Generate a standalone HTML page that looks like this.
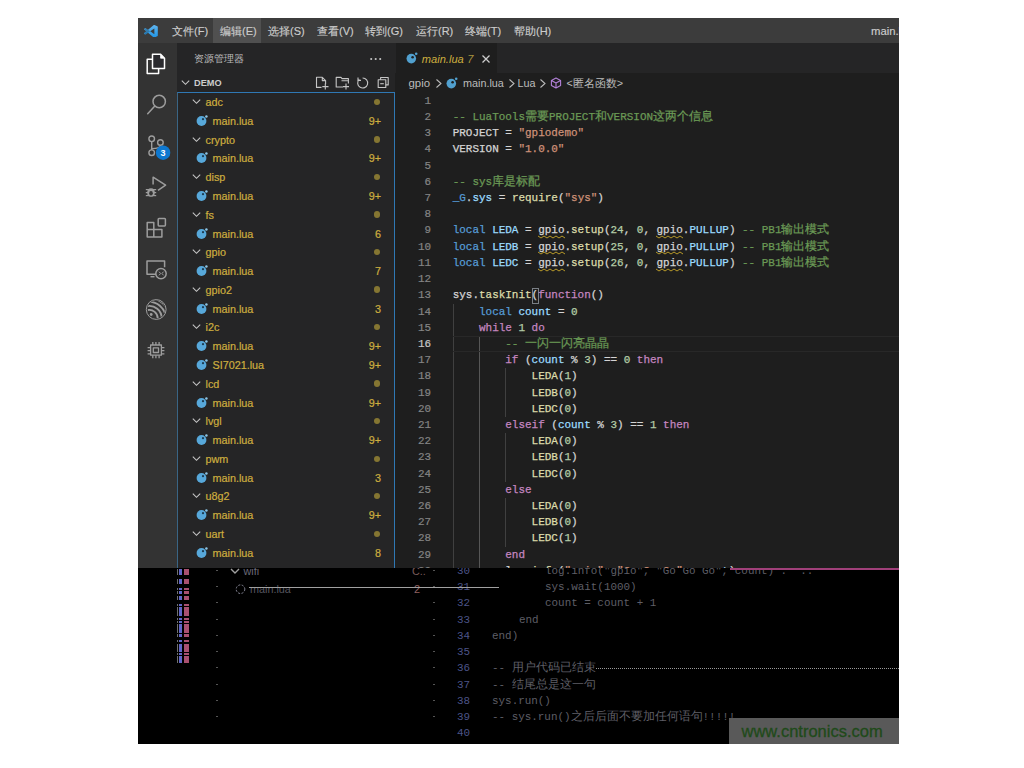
<!DOCTYPE html>
<html><head><meta charset="utf-8">
<style>
*{margin:0;padding:0;box-sizing:border-box}
html,body{width:1024px;height:768px;background:#fff;overflow:hidden;font-family:"Liberation Sans",sans-serif}
.a{position:absolute}
#win{position:absolute;left:138px;top:18px;width:761px;height:726px;background:#1e1e1e;overflow:hidden}
#title{left:0;top:0;width:761px;height:25px;background:#3c3c3c;color:#cccccc;font-size:11px}
#title .m{-webkit-text-stroke:0.15px currentColor;position:absolute;top:0;height:25px;line-height:27px;white-space:nowrap}
#act{left:0;top:25px;width:39px;height:525px;background:#333333}
#side{left:39px;top:25px;width:218px;height:525px;background:#252526;color:#cccccc;font-size:10.8px}
#ed{left:257px;top:25px;width:504px;height:525px;background:#1e1e1e}
#bot{left:0;top:550px;width:761px;height:176px;background:#000;overflow:hidden}
.row{-webkit-text-stroke:0.2px currentColor;position:absolute;left:0;width:218px;height:19px;line-height:20.4px;color:#cdae3f;white-space:nowrap}
.code{-webkit-text-stroke:0.25px currentColor;position:absolute;left:57.7px;font-family:"Liberation Mono",monospace;font-size:10.965px;white-space:pre;height:16.2px;line-height:16.2px;color:#d4d4d4}
.ln{-webkit-text-stroke:0.2px currentColor;position:absolute;left:0;width:36px;text-align:right;font-family:"Liberation Mono",monospace;font-size:10.92px;color:#858585;line-height:16.2px;height:16.2px}
.dot{position:absolute;left:196.8px;top:6.6px;width:6.4px;height:6.4px;border-radius:3.2px;background:#857632}
.badge{right:14px;text-align:right}
.cj{font-size:12px}
.sq{}
.bm{}
.guide{width:1px;background:#404040}
.cur{color:#c6c6c6}
.curline{border-top:1px solid #282828;border-bottom:1px solid #282828}
.gl{font-family:"Liberation Mono",monospace;white-space:pre;line-height:16px}
.k{color:#569cd6}.v{color:#9cdcfe}.f{color:#dcdcaa}.s{color:#ce9178}.c{color:#6a9955}.n{color:#b5cea8}.p{color:#c586c0}
</style></head><body>
<div id="win">
  <div id="title" class="a">
    <svg class="a" style="left:6px;top:6.6px" width="13.8" height="12.6" viewBox="0 0 100 100" preserveAspectRatio="none"><defs><linearGradient id="vg" x1="0" y1="0" x2="0" y2="1"><stop offset="0" stop-color="#5fb4ee"/><stop offset="1" stop-color="#1f95e6"/></linearGradient></defs><path fill="url(#vg)" d="M96.46 10.8 L75.86 0.87 C73.48 -0.28 70.64 0.2 68.77 2.07 L29.36 38.04 L12.17 25.0 C10.57 23.79 8.33 23.89 6.84 25.24 L1.34 30.25 C-0.48 31.9 -0.48 34.76 1.33 36.42 L16.25 50.0 L1.33 63.58 C-0.48 65.240 -0.48 68.1 1.34 69.75 L6.84 74.76 C8.33 76.11 10.57 76.21 12.17 75.0 L29.36 61.96 L68.77 97.93 C70.64 99.8 73.48 100.28 75.86 99.13 L96.46 89.2 C98.62 88.16 100 85.97 100 83.57 V16.43 C100 14.03 98.62 11.84 96.46 10.8 Z M75.02 72.7 L45.11 50 L75.02 27.3 V72.7 Z"/><path fill="#000" opacity="0.25" d="M29.36 38.04 L12.17 25.0 L1.34 30.25 L16.25 50 L1.34 69.75 L12.17 75 L29.36 61.96 L45.11 50 Z"/></svg>
    <div class="m" style="left:34px">文件(F)</div>
    <div class="m" style="left:75px;width:48px;background:#505050;line-height:25px"></div>
    <div class="m" style="left:82px">编辑(E)</div>
    <div class="m" style="left:130px">选择(S)</div>
    <div class="m" style="left:179px">查看(V)</div>
    <div class="m" style="left:227px">转到(G)</div>
    <div class="m" style="left:278px">运行(R)</div>
    <div class="m" style="left:327px">终端(T)</div>
    <div class="m" style="left:376px">帮助(H)</div>
    <div class="m" style="left:733px;font-size:11.3px">main.lua - demo</div>
  </div>
  <div id="act" class="a"></div>
  <div id="side" class="a">

<div class="a" style="left:16.5px;top:10px;font-size:9.5px;color:#bbbbbb;line-height:12px">资源管理器</div>
<svg class="a" style="left:193px;top:14px" width="12" height="4" viewBox="0 0 12 4"><circle cx="1.2" cy="2" r="1.05" fill="#c5c5c5"/><circle cx="5.7" cy="2" r="1.05" fill="#c5c5c5"/><circle cx="10.2" cy="2" r="1.05" fill="#c5c5c5"/></svg>
<svg class="a" style="left:4px;top:35px" width="9" height="9" viewBox="0 0 9 9"><path d="M0.8 2.6 L4.5 6.3 L8.2 2.6" stroke="#c5c5c5" stroke-width="1.1" fill="none"/></svg>
<div class="a" style="left:17px;top:33.5px;font-size:9.2px;font-weight:bold;color:#cccccc;line-height:12px">DEMO</div>
<div id="tree" class="a" style="left:0;top:49px;width:218px;height:476px;border:1px solid #2f78b4;border-left-color:#3a6585;border-bottom:none"></div>
<div class="row" style="top:49.10px"><svg class="a chev" style="left:15px;top:5px" width="9" height="9" viewBox="0 0 9 9"><path d="M0.8 2.6 L4.5 6.3 L8.2 2.6" stroke="#c5c5c5" stroke-width="1.1" fill="none"/></svg><span class="a" style="left:28.5px">adc</span><span class="dot"></span></div>
<div class="row" style="top:67.88px"><svg class="a" style="left:18.5px;top:4px" width="12" height="12" viewBox="0 0 12 12"><circle cx="5.5" cy="6.0" r="4.9" fill="#57a8da"/><circle cx="7.0" cy="4.2" r="1.1" fill="#1c3a50"/><circle cx="10.4" cy="1.4" r="1.25" fill="#8cc4e4"/></svg><span class="a" style="left:35.5px">main.lua</span><span class="a badge">9+</span></div>
<div class="row" style="top:86.66px"><svg class="a chev" style="left:15px;top:5px" width="9" height="9" viewBox="0 0 9 9"><path d="M0.8 2.6 L4.5 6.3 L8.2 2.6" stroke="#c5c5c5" stroke-width="1.1" fill="none"/></svg><span class="a" style="left:28.5px">crypto</span><span class="dot"></span></div>
<div class="row" style="top:105.44px"><svg class="a" style="left:18.5px;top:4px" width="12" height="12" viewBox="0 0 12 12"><circle cx="5.5" cy="6.0" r="4.9" fill="#57a8da"/><circle cx="7.0" cy="4.2" r="1.1" fill="#1c3a50"/><circle cx="10.4" cy="1.4" r="1.25" fill="#8cc4e4"/></svg><span class="a" style="left:35.5px">main.lua</span><span class="a badge">9+</span></div>
<div class="row" style="top:124.22px"><svg class="a chev" style="left:15px;top:5px" width="9" height="9" viewBox="0 0 9 9"><path d="M0.8 2.6 L4.5 6.3 L8.2 2.6" stroke="#c5c5c5" stroke-width="1.1" fill="none"/></svg><span class="a" style="left:28.5px">disp</span><span class="dot"></span></div>
<div class="row" style="top:143.00px"><svg class="a" style="left:18.5px;top:4px" width="12" height="12" viewBox="0 0 12 12"><circle cx="5.5" cy="6.0" r="4.9" fill="#57a8da"/><circle cx="7.0" cy="4.2" r="1.1" fill="#1c3a50"/><circle cx="10.4" cy="1.4" r="1.25" fill="#8cc4e4"/></svg><span class="a" style="left:35.5px">main.lua</span><span class="a badge">9+</span></div>
<div class="row" style="top:161.78px"><svg class="a chev" style="left:15px;top:5px" width="9" height="9" viewBox="0 0 9 9"><path d="M0.8 2.6 L4.5 6.3 L8.2 2.6" stroke="#c5c5c5" stroke-width="1.1" fill="none"/></svg><span class="a" style="left:28.5px">fs</span><span class="dot"></span></div>
<div class="row" style="top:180.56px"><svg class="a" style="left:18.5px;top:4px" width="12" height="12" viewBox="0 0 12 12"><circle cx="5.5" cy="6.0" r="4.9" fill="#57a8da"/><circle cx="7.0" cy="4.2" r="1.1" fill="#1c3a50"/><circle cx="10.4" cy="1.4" r="1.25" fill="#8cc4e4"/></svg><span class="a" style="left:35.5px">main.lua</span><span class="a badge">6</span></div>
<div class="row" style="top:199.34px"><svg class="a chev" style="left:15px;top:5px" width="9" height="9" viewBox="0 0 9 9"><path d="M0.8 2.6 L4.5 6.3 L8.2 2.6" stroke="#c5c5c5" stroke-width="1.1" fill="none"/></svg><span class="a" style="left:28.5px">gpio</span><span class="dot"></span></div>
<div class="row" style="top:218.12px"><svg class="a" style="left:18.5px;top:4px" width="12" height="12" viewBox="0 0 12 12"><circle cx="5.5" cy="6.0" r="4.9" fill="#57a8da"/><circle cx="7.0" cy="4.2" r="1.1" fill="#1c3a50"/><circle cx="10.4" cy="1.4" r="1.25" fill="#8cc4e4"/></svg><span class="a" style="left:35.5px">main.lua</span><span class="a badge">7</span></div>
<div class="row" style="top:236.90px"><svg class="a chev" style="left:15px;top:5px" width="9" height="9" viewBox="0 0 9 9"><path d="M0.8 2.6 L4.5 6.3 L8.2 2.6" stroke="#c5c5c5" stroke-width="1.1" fill="none"/></svg><span class="a" style="left:28.5px">gpio2</span><span class="dot"></span></div>
<div class="row" style="top:255.68px"><svg class="a" style="left:18.5px;top:4px" width="12" height="12" viewBox="0 0 12 12"><circle cx="5.5" cy="6.0" r="4.9" fill="#57a8da"/><circle cx="7.0" cy="4.2" r="1.1" fill="#1c3a50"/><circle cx="10.4" cy="1.4" r="1.25" fill="#8cc4e4"/></svg><span class="a" style="left:35.5px">main.lua</span><span class="a badge">3</span></div>
<div class="row" style="top:274.46px"><svg class="a chev" style="left:15px;top:5px" width="9" height="9" viewBox="0 0 9 9"><path d="M0.8 2.6 L4.5 6.3 L8.2 2.6" stroke="#c5c5c5" stroke-width="1.1" fill="none"/></svg><span class="a" style="left:28.5px">i2c</span><span class="dot"></span></div>
<div class="row" style="top:293.24px"><svg class="a" style="left:18.5px;top:4px" width="12" height="12" viewBox="0 0 12 12"><circle cx="5.5" cy="6.0" r="4.9" fill="#57a8da"/><circle cx="7.0" cy="4.2" r="1.1" fill="#1c3a50"/><circle cx="10.4" cy="1.4" r="1.25" fill="#8cc4e4"/></svg><span class="a" style="left:35.5px">main.lua</span><span class="a badge">9+</span></div>
<div class="row" style="top:312.02px"><svg class="a" style="left:18.5px;top:4px" width="12" height="12" viewBox="0 0 12 12"><circle cx="5.5" cy="6.0" r="4.9" fill="#57a8da"/><circle cx="7.0" cy="4.2" r="1.1" fill="#1c3a50"/><circle cx="10.4" cy="1.4" r="1.25" fill="#8cc4e4"/></svg><span class="a" style="left:35.5px">SI7021.lua</span><span class="a badge">9+</span></div>
<div class="row" style="top:330.80px"><svg class="a chev" style="left:15px;top:5px" width="9" height="9" viewBox="0 0 9 9"><path d="M0.8 2.6 L4.5 6.3 L8.2 2.6" stroke="#c5c5c5" stroke-width="1.1" fill="none"/></svg><span class="a" style="left:28.5px">lcd</span><span class="dot"></span></div>
<div class="row" style="top:349.58px"><svg class="a" style="left:18.5px;top:4px" width="12" height="12" viewBox="0 0 12 12"><circle cx="5.5" cy="6.0" r="4.9" fill="#57a8da"/><circle cx="7.0" cy="4.2" r="1.1" fill="#1c3a50"/><circle cx="10.4" cy="1.4" r="1.25" fill="#8cc4e4"/></svg><span class="a" style="left:35.5px">main.lua</span><span class="a badge">9+</span></div>
<div class="row" style="top:368.36px"><svg class="a chev" style="left:15px;top:5px" width="9" height="9" viewBox="0 0 9 9"><path d="M0.8 2.6 L4.5 6.3 L8.2 2.6" stroke="#c5c5c5" stroke-width="1.1" fill="none"/></svg><span class="a" style="left:28.5px">lvgl</span><span class="dot"></span></div>
<div class="row" style="top:387.14px"><svg class="a" style="left:18.5px;top:4px" width="12" height="12" viewBox="0 0 12 12"><circle cx="5.5" cy="6.0" r="4.9" fill="#57a8da"/><circle cx="7.0" cy="4.2" r="1.1" fill="#1c3a50"/><circle cx="10.4" cy="1.4" r="1.25" fill="#8cc4e4"/></svg><span class="a" style="left:35.5px">main.lua</span><span class="a badge">9+</span></div>
<div class="row" style="top:405.92px"><svg class="a chev" style="left:15px;top:5px" width="9" height="9" viewBox="0 0 9 9"><path d="M0.8 2.6 L4.5 6.3 L8.2 2.6" stroke="#c5c5c5" stroke-width="1.1" fill="none"/></svg><span class="a" style="left:28.5px">pwm</span><span class="dot"></span></div>
<div class="row" style="top:424.70px"><svg class="a" style="left:18.5px;top:4px" width="12" height="12" viewBox="0 0 12 12"><circle cx="5.5" cy="6.0" r="4.9" fill="#57a8da"/><circle cx="7.0" cy="4.2" r="1.1" fill="#1c3a50"/><circle cx="10.4" cy="1.4" r="1.25" fill="#8cc4e4"/></svg><span class="a" style="left:35.5px">main.lua</span><span class="a badge">3</span></div>
<div class="row" style="top:443.48px"><svg class="a chev" style="left:15px;top:5px" width="9" height="9" viewBox="0 0 9 9"><path d="M0.8 2.6 L4.5 6.3 L8.2 2.6" stroke="#c5c5c5" stroke-width="1.1" fill="none"/></svg><span class="a" style="left:28.5px">u8g2</span><span class="dot"></span></div>
<div class="row" style="top:462.26px"><svg class="a" style="left:18.5px;top:4px" width="12" height="12" viewBox="0 0 12 12"><circle cx="5.5" cy="6.0" r="4.9" fill="#57a8da"/><circle cx="7.0" cy="4.2" r="1.1" fill="#1c3a50"/><circle cx="10.4" cy="1.4" r="1.25" fill="#8cc4e4"/></svg><span class="a" style="left:35.5px">main.lua</span><span class="a badge">9+</span></div>
<div class="row" style="top:481.04px"><svg class="a chev" style="left:15px;top:5px" width="9" height="9" viewBox="0 0 9 9"><path d="M0.8 2.6 L4.5 6.3 L8.2 2.6" stroke="#c5c5c5" stroke-width="1.1" fill="none"/></svg><span class="a" style="left:28.5px">uart</span><span class="dot"></span></div>
<div class="row" style="top:499.82px"><svg class="a" style="left:18.5px;top:4px" width="12" height="12" viewBox="0 0 12 12"><circle cx="5.5" cy="6.0" r="4.9" fill="#57a8da"/><circle cx="7.0" cy="4.2" r="1.1" fill="#1c3a50"/><circle cx="10.4" cy="1.4" r="1.25" fill="#8cc4e4"/></svg><span class="a" style="left:35.5px">main.lua</span><span class="a badge">8</span></div>
<div class="row" style="top:518.60px"><svg class="a chev" style="left:15px;top:5px" width="9" height="9" viewBox="0 0 9 9"><path d="M0.8 2.6 L4.5 6.3 L8.2 2.6" stroke="#c5c5c5" stroke-width="1.1" fill="none"/></svg><span class="a" style="left:28.5px">wifi</span><span class="dot"></span></div>
</div>
  <div id="ed" class="a">
<div class="a" style="left:0;top:0;width:504px;height:29.8px;background:#252526"></div>
<div class="a" style="left:1px;top:0;width:101px;height:29.8px;background:#1e1e1e"></div>
<svg class="a" style="left:10.8px;top:8.8px" width="12" height="12" viewBox="0 0 12 12"><circle cx="5.3" cy="6.6" r="4.8" fill="#51a0cf"/><circle cx="6.6" cy="5.2" r="1.3" fill="#1e1e1e"/><circle cx="10.2" cy="1.8" r="1.3" fill="#51a0cf"/></svg>
<div class="a" style="left:26.8px;top:9px;font-size:11.1px;font-style:italic;color:#cdae3f;line-height:14px;white-space:nowrap">main.lua <span style="color:#a8923e;margin-left:0.5px">7</span></div>
<svg class="a" style="left:86px;top:10.5px" width="10" height="10" viewBox="0 0 10 10"><path d="M1.5 1.5 L8.5 8.5 M8.5 1.5 L1.5 8.5" stroke="#cccccc" stroke-width="1.3"/></svg>
<div class="a" style="left:13.5px;top:33px;font-size:11.4px;color:#bcbcbc;line-height:14px;white-space:nowrap">gpio</div>
<svg class="a" style="left:39.5px;top:34.5px" width="8" height="11" viewBox="0 0 8 11"><path d="M1.5 1.5 L6 5.5 L1.5 9.5" stroke="#bcbcbc" stroke-width="1.05" fill="none"/></svg>
<svg class="a" style="left:51px;top:34px" width="12" height="12" viewBox="0 0 12 12"><circle cx="5.3" cy="6.6" r="4.8" fill="#51a0cf"/><circle cx="6.6" cy="5.2" r="1.3" fill="#1e1e1e"/><circle cx="10.2" cy="1.8" r="1.3" fill="#51a0cf"/></svg>
<div class="a" style="left:68px;top:33px;font-size:10.8px;color:#bcbcbc;line-height:14px;white-space:nowrap">main.lua</div>
<svg class="a" style="left:112.5px;top:34.5px" width="8" height="11" viewBox="0 0 8 11"><path d="M1.5 1.5 L6 5.5 L1.5 9.5" stroke="#bcbcbc" stroke-width="1.05" fill="none"/></svg>
<div class="a" style="left:122.5px;top:33px;font-size:10.8px;color:#bcbcbc;line-height:14px;white-space:nowrap">Lua</div>
<svg class="a" style="left:144px;top:34.5px" width="8" height="11" viewBox="0 0 8 11"><path d="M1.5 1.5 L6 5.5 L1.5 9.5" stroke="#bcbcbc" stroke-width="1.05" fill="none"/></svg>
<svg class="a" style="left:155px;top:34px" width="12" height="12" viewBox="0 0 12 12"><path d="M6 1 L10.6 3.5 V8.5 L6 11 L1.4 8.5 V3.5 Z M1.4 3.5 L6 6 L10.6 3.5 M6 6 V11" stroke="#b180d7" stroke-width="1.1" fill="none" stroke-linejoin="round"/></svg>
<div class="a" style="left:171.5px;top:33px;font-size:10.8px;color:#bcbcbc;line-height:14px;white-space:nowrap">&lt;匿名函数&gt;</div>
<div class="a guide" style="left:57.70px;top:260.53px;height:291.78px"></div>
<div class="a guide" style="left:84.02px;top:292.95px;height:260px;background:#565656"></div>
<div class="a guide" style="left:110.34px;top:325.37px;height:48.63px"></div>
<div class="a guide" style="left:110.34px;top:390.21px;height:48.63px"></div>
<div class="a guide" style="left:110.34px;top:455.05px;height:48.63px"></div>
<svg class="a" style="left:142.94px;top:192.08px" width="27" height="4" viewBox="0 0 27 4"><polyline points="0.00 1.0 3.00 3.0 6.00 1.0 9.00 3.0 12.00 1.0 15.00 3.0 18.00 1.0 21.00 3.0 24.00 1.0 27.00 3.0" fill="none" stroke="#c9a82a" stroke-width="0.9"/></svg>
<svg class="a" style="left:261.38px;top:192.08px" width="27" height="4" viewBox="0 0 27 4"><polyline points="0.00 1.0 3.00 3.0 6.00 1.0 9.00 3.0 12.00 1.0 15.00 3.0 18.00 1.0 21.00 3.0 24.00 1.0 27.00 3.0" fill="none" stroke="#c9a82a" stroke-width="0.9"/></svg>
<svg class="a" style="left:142.94px;top:208.29px" width="27" height="4" viewBox="0 0 27 4"><polyline points="0.00 1.0 3.00 3.0 6.00 1.0 9.00 3.0 12.00 1.0 15.00 3.0 18.00 1.0 21.00 3.0 24.00 1.0 27.00 3.0" fill="none" stroke="#c9a82a" stroke-width="0.9"/></svg>
<svg class="a" style="left:261.38px;top:208.29px" width="27" height="4" viewBox="0 0 27 4"><polyline points="0.00 1.0 3.00 3.0 6.00 1.0 9.00 3.0 12.00 1.0 15.00 3.0 18.00 1.0 21.00 3.0 24.00 1.0 27.00 3.0" fill="none" stroke="#c9a82a" stroke-width="0.9"/></svg>
<svg class="a" style="left:142.94px;top:224.50px" width="27" height="4" viewBox="0 0 27 4"><polyline points="0.00 1.0 3.00 3.0 6.00 1.0 9.00 3.0 12.00 1.0 15.00 3.0 18.00 1.0 21.00 3.0 24.00 1.0 27.00 3.0" fill="none" stroke="#c9a82a" stroke-width="0.9"/></svg>
<svg class="a" style="left:261.38px;top:224.50px" width="27" height="4" viewBox="0 0 27 4"><polyline points="0.00 1.0 3.00 3.0 6.00 1.0 9.00 3.0 12.00 1.0 15.00 3.0 18.00 1.0 21.00 3.0 24.00 1.0 27.00 3.0" fill="none" stroke="#c9a82a" stroke-width="0.9"/></svg>
<div class="a" style="left:136.6px;top:245.4px;width:7px;height:15.2px;border:1px solid #7a7f85"></div>
<div class="a curline" style="left:58px;top:292.95px;width:446px;height:16.21px"></div>
<div class="ln" style="top:49.80px">1</div>
<div class="ln" style="top:66.01px">2</div>
<div class="code" style="top:66.01px"><span class="c">-- LuaTools<span class="cj">需要</span>PROJECT<span class="cj">和</span>VERSION<span class="cj">这两个信息</span></span></div>
<div class="ln" style="top:82.22px">3</div>
<div class="code" style="top:82.22px">PROJECT = <span class="s">"gpiodemo"</span></div>
<div class="ln" style="top:98.43px">4</div>
<div class="code" style="top:98.43px">VERSION = <span class="s">"1.0.0"</span></div>
<div class="ln" style="top:114.64px">5</div>
<div class="ln" style="top:130.85px">6</div>
<div class="code" style="top:130.85px"><span class="c">-- sys<span class="cj">库是标配</span></span></div>
<div class="ln" style="top:147.06px">7</div>
<div class="code" style="top:147.06px"><span class="k">_G</span>.<span class="v">sys</span> = <span class="f">require</span>(<span class="s">"sys"</span>)</div>
<div class="ln" style="top:163.27px">8</div>
<div class="ln" style="top:179.48px">9</div>
<div class="code" style="top:179.48px"><span class="k">local</span> <span class="v">LEDA</span> = <span class="sq">gpio</span>.<span class="f">setup</span>(<span class="n">24</span>, <span class="n">0</span>, <span class="sq">gpio</span>.<span class="v">PULLUP</span>) <span class="c">-- PB1<span class="cj">输出模式</span></span></div>
<div class="ln" style="top:195.69px">10</div>
<div class="code" style="top:195.69px"><span class="k">local</span> <span class="v">LEDB</span> = <span class="sq">gpio</span>.<span class="f">setup</span>(<span class="n">25</span>, <span class="n">0</span>, <span class="sq">gpio</span>.<span class="v">PULLUP</span>) <span class="c">-- PB1<span class="cj">输出模式</span></span></div>
<div class="ln" style="top:211.90px">11</div>
<div class="code" style="top:211.90px"><span class="k">local</span> <span class="v">LEDC</span> = <span class="sq">gpio</span>.<span class="f">setup</span>(<span class="n">26</span>, <span class="n">0</span>, <span class="sq">gpio</span>.<span class="v">PULLUP</span>) <span class="c">-- PB1<span class="cj">输出模式</span></span></div>
<div class="ln" style="top:228.11px">12</div>
<div class="ln" style="top:244.32px">13</div>
<div class="code" style="top:244.32px">sys.<span class="f">taskInit</span><span class="bm">(</span><span class="p">function</span>()</div>
<div class="ln" style="top:260.53px">14</div>
<div class="code" style="top:260.53px">    <span class="k">local</span> <span class="v">count</span> = <span class="n">0</span></div>
<div class="ln" style="top:276.74px">15</div>
<div class="code" style="top:276.74px">    <span class="p">while</span> <span class="n">1</span> <span class="p">do</span></div>
<div class="ln cur" style="top:292.95px">16</div>
<div class="code" style="top:292.95px">        <span class="c">-- <span class="cj">一闪一闪亮晶晶</span></span></div>
<div class="ln" style="top:309.16px">17</div>
<div class="code" style="top:309.16px">        <span class="p">if</span> (<span class="v">count</span> % <span class="n">3</span>) == <span class="n">0</span> <span class="p">then</span></div>
<div class="ln" style="top:325.37px">18</div>
<div class="code" style="top:325.37px">            <span class="f">LEDA</span>(<span class="n">1</span>)</div>
<div class="ln" style="top:341.58px">19</div>
<div class="code" style="top:341.58px">            <span class="f">LEDB</span>(<span class="n">0</span>)</div>
<div class="ln" style="top:357.79px">20</div>
<div class="code" style="top:357.79px">            <span class="f">LEDC</span>(<span class="n">0</span>)</div>
<div class="ln" style="top:374.00px">21</div>
<div class="code" style="top:374.00px">        <span class="p">elseif</span> (<span class="v">count</span> % <span class="n">3</span>) == <span class="n">1</span> <span class="p">then</span></div>
<div class="ln" style="top:390.21px">22</div>
<div class="code" style="top:390.21px">            <span class="f">LEDA</span>(<span class="n">0</span>)</div>
<div class="ln" style="top:406.42px">23</div>
<div class="code" style="top:406.42px">            <span class="f">LEDB</span>(<span class="n">1</span>)</div>
<div class="ln" style="top:422.63px">24</div>
<div class="code" style="top:422.63px">            <span class="f">LEDC</span>(<span class="n">0</span>)</div>
<div class="ln" style="top:438.84px">25</div>
<div class="code" style="top:438.84px">        <span class="p">else</span></div>
<div class="ln" style="top:455.05px">26</div>
<div class="code" style="top:455.05px">            <span class="f">LEDA</span>(<span class="n">0</span>)</div>
<div class="ln" style="top:471.26px">27</div>
<div class="code" style="top:471.26px">            <span class="f">LEDB</span>(<span class="n">0</span>)</div>
<div class="ln" style="top:487.47px">28</div>
<div class="code" style="top:487.47px">            <span class="f">LEDC</span>(<span class="n">1</span>)</div>
<div class="ln" style="top:503.68px">29</div>
<div class="code" style="top:503.68px">        <span class="p">end</span></div>
<div class="ln" style="top:519.89px">30</div>
<div class="code" style="top:519.89px">        log.<span class="f">info</span>(<span class="s">"gpio"</span>, <span class="s">"Go Go Go"</span>, <span class="v">count</span>)</div>
</div>
  <div id="bot" class="a">
<div class="a" style="left:38.7px;top:1px;width:1px;height:6px;background:#707070"></div><div class="a" style="left:40.7px;top:1px;width:3.2px;height:6px;background:#6066c8"></div><div class="a" style="left:45.9px;top:1px;width:5.2px;height:6px;background:#a85070"></div>
<div class="a" style="left:38.7px;top:11px;width:1px;height:5px;background:#707070"></div><div class="a" style="left:40.7px;top:11px;width:3.2px;height:5px;background:#6066c8"></div><div class="a" style="left:45.9px;top:11px;width:5.2px;height:5px;background:#a85070"></div>
<div class="a" style="left:38.7px;top:20px;width:1px;height:2px;background:#707070"></div><div class="a" style="left:40.7px;top:20px;width:3.2px;height:2px;background:#6066c8"></div><div class="a" style="left:45.9px;top:20px;width:5.2px;height:2px;background:#a85070"></div>
<div class="a" style="left:38.7px;top:23px;width:1px;height:3px;background:#707070"></div><div class="a" style="left:40.7px;top:23px;width:3.2px;height:3px;background:#6066c8"></div><div class="a" style="left:45.9px;top:23px;width:5.2px;height:3px;background:#a85070"></div>
<div class="a" style="left:38.7px;top:28px;width:1px;height:4px;background:#707070"></div><div class="a" style="left:40.7px;top:28px;width:3.2px;height:4px;background:#6066c8"></div><div class="a" style="left:45.9px;top:28px;width:5.2px;height:4px;background:#a85070"></div>
<div class="a" style="left:38.7px;top:36px;width:1px;height:2px;background:#707070"></div><div class="a" style="left:40.7px;top:36px;width:3.2px;height:2px;background:#6066c8"></div><div class="a" style="left:45.9px;top:36px;width:5.2px;height:2px;background:#a85070"></div>
<div class="a" style="left:38.7px;top:39px;width:1px;height:9px;background:#707070"></div><div class="a" style="left:40.7px;top:39px;width:3.2px;height:9px;background:#6066c8"></div><div class="a" style="left:45.9px;top:39px;width:5.2px;height:9px;background:#a85070"></div>
<div class="a" style="left:38.7px;top:50px;width:1px;height:2px;background:#707070"></div><div class="a" style="left:40.7px;top:50px;width:3.2px;height:2px;background:#6066c8"></div><div class="a" style="left:45.9px;top:50px;width:5.2px;height:2px;background:#a85070"></div>
<div class="a" style="left:38.7px;top:53px;width:1px;height:2px;background:#707070"></div><div class="a" style="left:40.7px;top:53px;width:3.2px;height:2px;background:#6066c8"></div><div class="a" style="left:45.9px;top:53px;width:5.2px;height:2px;background:#a85070"></div>
<div class="a" style="left:38.7px;top:56px;width:1px;height:5px;background:#707070"></div><div class="a" style="left:40.7px;top:56px;width:3.2px;height:5px;background:#6066c8"></div><div class="a" style="left:45.9px;top:56px;width:5.2px;height:5px;background:#a85070"></div>
<div class="a" style="left:38.7px;top:61px;width:1px;height:4px;background:#707070"></div><div class="a" style="left:40.7px;top:61px;width:3.2px;height:4px;background:#6066c8"></div><div class="a" style="left:45.9px;top:61px;width:5.2px;height:4px;background:#a85070"></div>
<div class="a" style="left:38.7px;top:66px;width:1px;height:3px;background:#707070"></div><div class="a" style="left:40.7px;top:66px;width:3.2px;height:3px;background:#6066c8"></div><div class="a" style="left:45.9px;top:66px;width:5.2px;height:3px;background:#a85070"></div>
<div class="a" style="left:38.7px;top:72px;width:1px;height:2px;background:#707070"></div><div class="a" style="left:40.7px;top:72px;width:3.2px;height:2px;background:#6066c8"></div><div class="a" style="left:45.9px;top:72px;width:5.2px;height:2px;background:#a85070"></div>
<div class="a" style="left:38.7px;top:76px;width:1px;height:5px;background:#707070"></div><div class="a" style="left:40.7px;top:76px;width:3.2px;height:5px;background:#6066c8"></div><div class="a" style="left:45.9px;top:76px;width:5.2px;height:5px;background:#a85070"></div>
<div class="a" style="left:38.7px;top:81px;width:1px;height:3px;background:#707070"></div><div class="a" style="left:40.7px;top:81px;width:3.2px;height:3px;background:#6066c8"></div><div class="a" style="left:45.9px;top:81px;width:5.2px;height:3px;background:#a85070"></div>
<div class="a" style="left:38.7px;top:85px;width:1px;height:2px;background:#707070"></div><div class="a" style="left:40.7px;top:85px;width:3.2px;height:2px;background:#6066c8"></div><div class="a" style="left:45.9px;top:85px;width:5.2px;height:2px;background:#a85070"></div>
<div class="a" style="left:38.7px;top:88px;width:1px;height:7px;background:#707070"></div><div class="a" style="left:40.7px;top:88px;width:3.2px;height:7px;background:#6066c8"></div><div class="a" style="left:45.9px;top:88px;width:5.2px;height:7px;background:#a85070"></div>
<div class="a gl" style="left:319.0px;top:-5.0px;color:#4c5488;font-size:10.92px;">30</div>
<div class="a gl" style="left:319.0px;top:11.2px;color:#4c5488;font-size:10.92px;">31</div>
<div class="a gl" style="left:319.0px;top:27.4px;color:#4c5488;font-size:10.92px;">32</div>
<div class="a gl" style="left:319.0px;top:43.6px;color:#4c5488;font-size:10.92px;">33</div>
<div class="a gl" style="left:319.0px;top:59.8px;color:#4c5488;font-size:10.92px;">34</div>
<div class="a gl" style="left:319.0px;top:76.0px;color:#4c5488;font-size:10.92px;">35</div>
<div class="a gl" style="left:319.0px;top:92.3px;color:#4c5488;font-size:10.92px;">36</div>
<div class="a gl" style="left:319.0px;top:108.5px;color:#4c5488;font-size:10.92px;">37</div>
<div class="a gl" style="left:319.0px;top:124.7px;color:#4c5488;font-size:10.92px;">38</div>
<div class="a gl" style="left:319.0px;top:140.9px;color:#4c5488;font-size:10.92px;">39</div>
<div class="a gl" style="left:319.0px;top:157.1px;color:#4c5488;font-size:10.92px;">40</div>
<div class="a gl" style="left:407.0px;top:-5.0px;color:#5e5e66;font-size:10.92px;">log.info("gpio", "Go Go Go", count) .  ..</div>
<div class="a gl" style="left:407.0px;top:11.2px;color:#5e5e66;font-size:10.92px;">sys.wait(1000)</div>
<div class="a gl" style="left:407.0px;top:27.4px;color:#5e5e66;font-size:10.92px;">count = count + 1</div>
<div class="a gl" style="left:381.0px;top:43.6px;color:#5e5e66;font-size:10.92px;">end</div>
<div class="a gl" style="left:354.0px;top:59.8px;color:#5e5e66;font-size:10.92px;">end)</div>
<div class="a gl" style="left:354.0px;top:92.3px;color:#5e5e66;font-size:10.92px;">-- <span class="cj">用户代码已结束</span></div>
<div class="a gl" style="left:354.0px;top:108.5px;color:#5e5e66;font-size:10.92px;">-- <span class="cj">结尾总是这一句</span></div>
<div class="a gl" style="left:354.0px;top:124.7px;color:#5e5e66;font-size:10.92px;">sys.run()</div>
<div class="a gl" style="left:354.0px;top:140.9px;color:#5e5e66;font-size:10.92px;">-- sys.run()<span class="cj">之后后面不要加任何语句</span>!!!!!</div>
<div class="a" style="left:78px;top:2.0px;width:2px;height:1px;background:#555"></div>
<div class="a" style="left:295px;top:2.0px;width:2px;height:1px;background:#555"></div>
<div class="a" style="left:78px;top:18.2px;width:2px;height:1px;background:#555"></div>
<div class="a" style="left:295px;top:18.2px;width:2px;height:1px;background:#555"></div>
<div class="a" style="left:78px;top:34.4px;width:2px;height:1px;background:#555"></div>
<div class="a" style="left:295px;top:34.4px;width:2px;height:1px;background:#555"></div>
<div class="a" style="left:78px;top:50.6px;width:2px;height:1px;background:#555"></div>
<div class="a" style="left:295px;top:50.6px;width:2px;height:1px;background:#555"></div>
<div class="a" style="left:78px;top:66.8px;width:2px;height:1px;background:#555"></div>
<div class="a" style="left:295px;top:66.8px;width:2px;height:1px;background:#555"></div>
<div class="a" style="left:78px;top:83.0px;width:2px;height:1px;background:#555"></div>
<div class="a" style="left:295px;top:83.0px;width:2px;height:1px;background:#555"></div>
<div class="a" style="left:78px;top:99.3px;width:2px;height:1px;background:#555"></div>
<div class="a" style="left:295px;top:99.3px;width:2px;height:1px;background:#555"></div>
<div class="a" style="left:78px;top:115.5px;width:2px;height:1px;background:#555"></div>
<div class="a" style="left:295px;top:115.5px;width:2px;height:1px;background:#555"></div>
<div class="a" style="left:78px;top:131.7px;width:2px;height:1px;background:#555"></div>
<div class="a" style="left:295px;top:131.7px;width:2px;height:1px;background:#555"></div>
<div class="a" style="left:78px;top:147.9px;width:2px;height:1px;background:#555"></div>
<div class="a" style="left:295px;top:147.9px;width:2px;height:1px;background:#555"></div>
<svg class="a" style="left:92px;top:-1px" width="10" height="8" viewBox="0 0 10 8"><path d="M1 2 L5 6 L9 2" stroke="#a0a0a0" stroke-width="1.4" fill="none"/></svg><div class="a gl" style="left:105.5px;top:-5.0px;color:#6a6a78;font-size:10.8px;font-family:Liberation Sans">wifi</div><div class="a gl" style="left:274px;top:-5.0px;color:#7a5a5a;font-size:10.8px;font-family:Liberation Sans">C..</div><div class="a gl" style="left:276px;top:13px;color:#906060;font-size:11px;font-family:Liberation Sans">2</div>
<svg class="a" style="left:97px;top:15px" width="12" height="12" viewBox="0 0 12 12"><circle cx="5.5" cy="6.2" r="4.3" stroke="#8a8a9a" stroke-width="1" fill="none" stroke-dasharray="2 1.5"/></svg><div class="a gl" style="left:112px;top:13.0px;color:#55555f;font-size:10.8px;font-family:Liberation Sans">main.lua</div>
<div class="a" style="left:111px;top:19px;width:250px;height:1px;background:#a0a0a0"></div>
<div class="a" style="left:592px;top:0px;width:169px;height:1.5px;background:#a0407a"></div>
<div class="a" style="left:458px;top:100px;width:303px;height:0;border-top:1px dotted #9a9a9a"></div>
<div class="a" style="left:591px;top:150.2px;width:170px;height:25.6px;background:#595959"></div>
<div class="a" style="left:603.5px;top:151px;font-size:16.5px;line-height:24px;color:#1f4a1a;-webkit-text-stroke:0.3px #1f4a1a;white-space:nowrap;font-family:Liberation Sans">www.cntronics.com</div>
</div>
</div>
<svg class="a" style="left:0;top:0" width="1024" height="768" viewBox="0 0 1024 768">
<g fill="none" stroke-linejoin="round">
<!-- explorer -->
<path d="M152.5 59.2 H147.2 V73.4 H158.6 V68.4" stroke="#ffffff" stroke-width="1.5"/>
<path d="M152.5 54.3 H160.6 L164.5 58.2 V68.4 H152.5 Z" stroke="#ffffff" stroke-width="1.5" fill="#2a2a2e"/><path d="M160.6 54.5 V58.2 H164.3 Z" fill="#ffffff" stroke="#ffffff" stroke-width="0.8"/>
<!-- search -->
<g stroke="#9d9d9d" stroke-width="1.5"><circle cx="159.2" cy="101.5" r="6.2"/><path d="M154.6 106.2 L147.7 113.8" stroke-linecap="round"/></g>
<!-- scm -->
<g stroke="#9d9d9d" stroke-width="1.4"><circle cx="151.7" cy="138.8" r="2.8"/><circle cx="160.4" cy="142.5" r="2.8"/><circle cx="151.7" cy="152.7" r="2.8"/><path d="M151.7 141.6 V149.9 M151.7 148.6 Q160.4 148.6 160.4 145.3"/></g>
<circle cx="163.1" cy="152.7" r="7.2" fill="#0e78d0" stroke="none"/>
<!-- debug -->
<g stroke="#9d9d9d" stroke-width="1.5"><path d="M153.1 184.5 V177.2 L165.6 185.2 L158 190.3"/></g>
<g fill="#9d9d9d" stroke="none"><ellipse cx="151" cy="192.5" rx="3.8" ry="4.3"/><rect x="145.8" y="189" width="10.4" height="1.2"/><rect x="145.8" y="192" width="10.4" height="1.2"/><rect x="145.8" y="195" width="10.4" height="1.2"/></g>
<ellipse cx="151" cy="193.3" rx="1.8" ry="2.2" fill="#333333" stroke="none"/>
<!-- extensions -->
<g stroke="#9d9d9d" stroke-width="1.5"><path d="M147.2 222.4 H153.8 V237 H147.2 Z M147.2 229.6 H161.9 V237 H153.8"/><rect x="158.2" y="218.5" width="7.2" height="7.4" rx="0.8"/></g>
<!-- remote -->
<g stroke="#9d9d9d" stroke-width="1.5"><path d="M156 274.3 H147 V261 H164.6 V267.2"/><circle cx="161" cy="273.6" r="5.2"/><path d="M159 271.7 L160.6 273.5 L159 275.3 M163.5 271.7 L162 273.5 L163.5 275.3" stroke-width="1"/></g>
<rect x="150.5" y="276" width="4" height="1.4" fill="#9d9d9d" stroke="none"/>
<!-- espressif -->
<clipPath id="espc"><circle cx="156.2" cy="309.5" r="8.9"/></clipPath>
<circle cx="156.2" cy="309.5" r="9.9" stroke="#9d9d9d" stroke-width="1"/>
<g clip-path="url(#espc)" stroke="#9d9d9d" stroke-width="1.9">
<path d="M147.84 310.03 A8.4 8.4 0 0 1 157.70 318.30 M147.15 306.09 A12.4 12.4 0 0 1 161.70 318.30 M146.45 302.15 A16.4 16.4 0 0 1 165.70 318.30 M145.79 298.41 A20.2 20.2 0 0 1 169.50 318.30"/>
</g>
<circle cx="151.2" cy="314.5" r="1.4" fill="#9d9d9d" stroke="none"/>
<!-- chip -->
<g stroke="#9d9d9d" stroke-width="1.3"><rect x="150.6" y="345" width="10.8" height="10.2"/><rect x="153.3" y="347.9" width="5.2" height="4.6"/>
<path d="M152.8 342 V345 M155.9 342 V345 M159.1 342 V345 M152.8 355.2 V358.2 M155.9 355.2 V358.2 M159.1 355.2 V358.2 M147.6 347.6 H150.6 M147.6 350.7 H150.6 M147.6 353.8 H150.6 M161.4 347.6 H164.4 M161.4 350.7 H164.4 M161.4 353.8 H164.4"/></g>
<!-- explorer actions -->
<g stroke="#c5c5c5" stroke-width="1.1">
<path d="M321.5 87.4 H316.5 V77.3 H322.3 L325.6 80.6 V84.2 M322.3 77.3 V80.6 H325.6"/>
<path d="M325.3 83.6 V89.6 M322.3 86.6 H328.5"/>
<path d="M343 87 H336.2 V77.4 H341 L342 78.6 H348.4 V83.5 M341.5 80.8 H348.4"/>
<path d="M346 83.6 V89.6 M343 86.6 H349"/>
<path d="M359.2 79.4 A 5 5 0 1 0 362.6 78"/><path d="M358 77.4 V80.4 H361" />
<path d="M380.6 79.8 V77.5 H388.2 V84.9 H385.8"/><rect x="378.2" y="79.8" width="7.6" height="7.7"/><path d="M380.2 83.7 H383.8"/>
</g>
</g>
<text x="163.1" y="156.1" fill="#ffffff" font-size="9" font-weight="bold" text-anchor="middle" font-family="Liberation Sans">3</text>
</svg>
</body></html>
